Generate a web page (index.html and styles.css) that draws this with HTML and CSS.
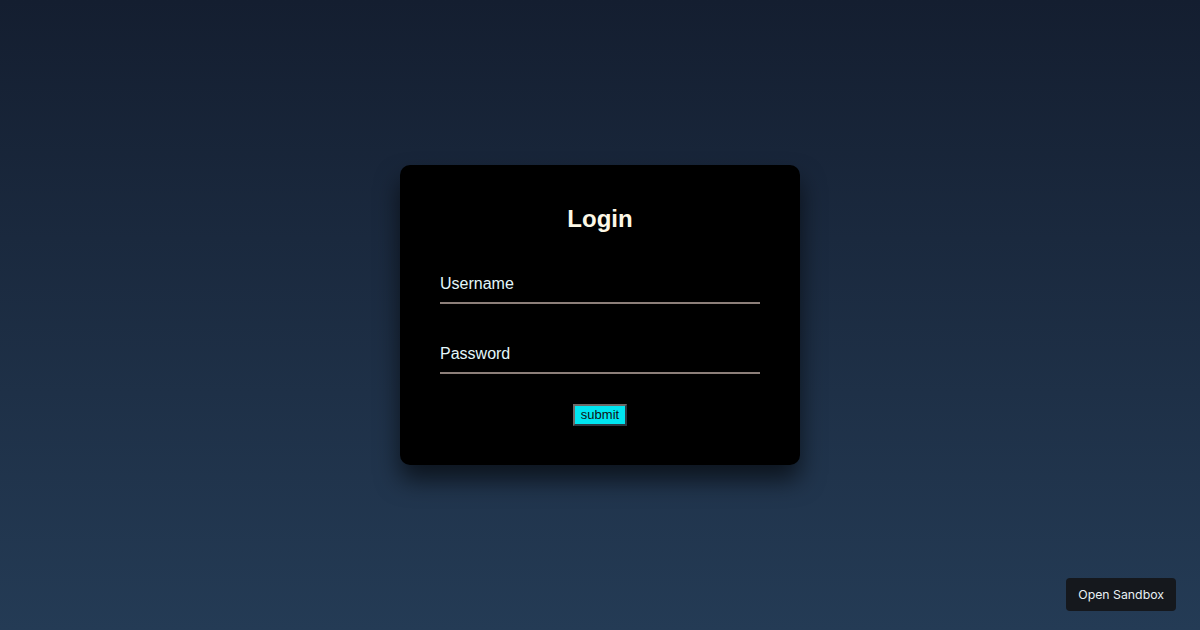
FILE: index.html
```html
<!DOCTYPE html>
<html lang="en">
<head>
    <meta charset="UTF-8">
    <meta name="viewport" content="width=device-width, initial-scale=1.0">
    <title>Login</title>
    <link rel="stylesheet" href="styles.css">
</head>
<body>
<div class="login-box">
    <h2>Login</h2>
    <form>
        <div class="user-box">
            <input type="text" name="username" placeholder="Username">
        </div>
        <div class="user-box">
            <input type="password" name="password" placeholder="Password">
        </div>
        <div class="actions">
            <input class="btn" type="submit" value="submit">
        </div>
    </form>
</div>

<a class="sandbox-btn" href="#">Open Sandbox</a>
</body>
</html>
```

FILE: styles.css
```css
html {
    height: 100%;
}
body {
    margin: 0;
    padding: 0;
    height: 100%;
    font-family: "Liberation Sans", Arial, sans-serif;
    background: linear-gradient(#141e30, #243b55);
    display: flex;
    align-items: center;
    justify-content: center;
}
.login-box {
    width: 400px;
    padding: 40px 40px 39px;
    box-sizing: border-box;
    background: #000;
    border-radius: 10px;
    box-shadow: 0 15px 25px rgba(0, 0, 0, 0.6);
}
.login-box h2 {
    margin: 0 0 31px;
    padding: 0;
    font-size: 24px;
    line-height: 28px;
    color: #fdf8e6;
    text-align: center;
}
.user-box input {
    display: block;
    width: 100%;
    box-sizing: border-box;
    padding: 11px 0 9px;
    margin-bottom: 30px;
    font-family: inherit;
    font-size: 16px;
    line-height: 18px;
    color: #e3f7fb;
    background: transparent;
    border: none;
    border-bottom: 2px solid #8c7f79;
    outline: none;
}
.user-box:last-of-type input {
    margin-bottom: 29px;
}
.user-box input::placeholder {
    color: #e3f7fb;
    opacity: 1;
}
.actions {
    text-align: center;
}
.btn {
    font-family: inherit;
    font-size: 13px;
    line-height: 16px;
    padding: 1px 6px;
    color: #111;
    background: #00e5f0;
    border: 2px solid;
    border-color: #6e6a68 #2b3a44 #2b3a44 #6e6a68;
    cursor: pointer;
}
.sandbox-btn {
    position: fixed;
    right: 24px;
    bottom: 19px;
    padding: 9px 12px;
    font-family: Inter, "Liberation Sans", sans-serif;
    font-size: 12.3px;
    line-height: 15px;
    color: #e8f0f4;
    background: #15181d;
    border-radius: 4px;
    text-decoration: none;
}
```
